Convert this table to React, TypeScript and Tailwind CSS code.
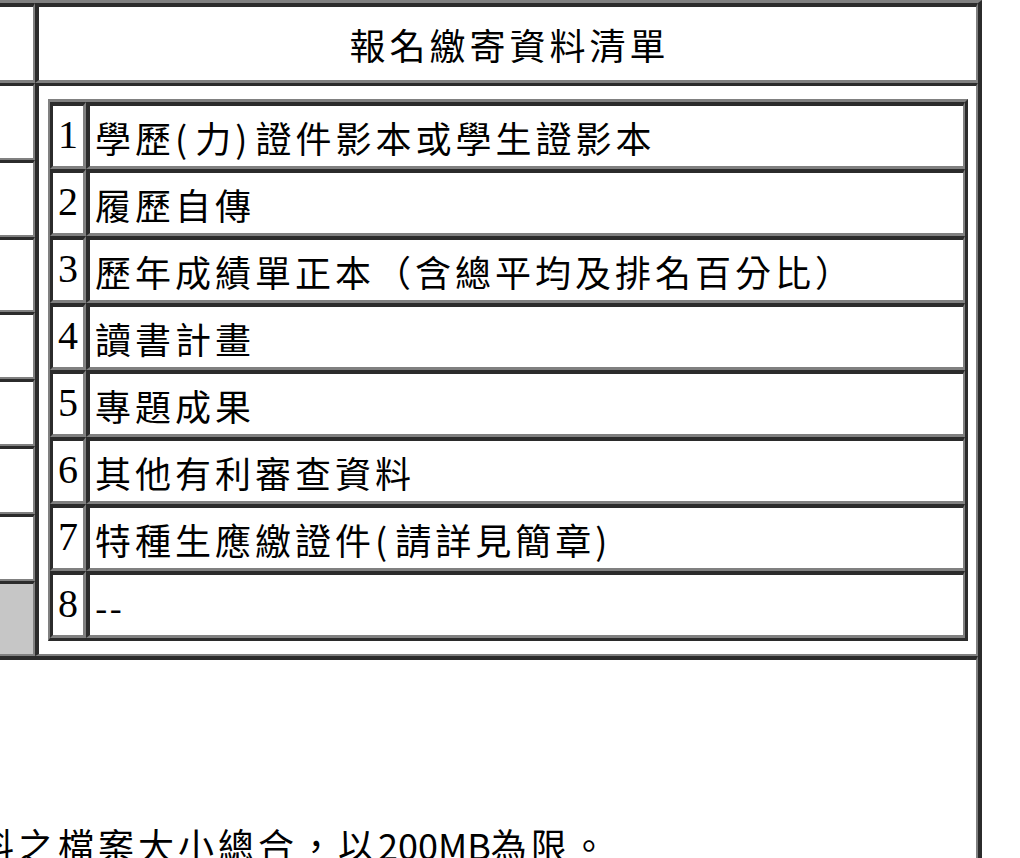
const cjk = "font-['Noto_Sans_CJK_TC','Noto_Sans_CJK_SC',sans-serif]";

const items = [
  "學歷(力)證件影本或學生證影本",
  "履歷自傳",
  "歷年成績單正本（含總平均及排名百分比）",
  "讀書計畫",
  "專題成果",
  "其他有利審查資料",
  "特種生應繳證件(請詳見簡章)",
  "--",
];

// left column cell heights (content only)
const leftRows = [72, 72, 70, 62, 62, 63, 62, 70];

function Label({ text }: { text: string }) {
  if (text === "--") return <span className="tracking-[2px]">--</span>;
  const parts = text.split(/([()])/);
  return (
    <>
      {parts.map((p, i) =>
        p === "(" || p === ")" ? (
          <span key={i} className="tracking-[8px]">
            {p}
          </span>
        ) : (
          <span key={i}>{p}</span>
        )
      )}
    </>
  );
}

function ListTable() {
  return (
    <div className="w-full border-t-[3px] border-l-[2px] border-t-[#808080] border-l-[#808080] border-r-[3px] border-b-[3px] border-r-[#2b2b2b] border-b-[#2b2b2b]">
      {items.map((it, i) => (
        <div key={i} className="flex h-[67px]">
          <div className="w-[36px] shrink-0 border-t-[4px] border-l-[3px] border-t-[#2b2b2b] border-l-[#2b2b2b] border-b-[3px] border-r-[3px] border-b-[#808080] border-r-[#808080] flex justify-center pt-[9px] font-['Liberation_Serif',serif] text-[40px] leading-[40px] text-black">
            {i + 1}
          </div>
          <div className="flex-1 border-t-[4px] border-l-[4px] border-t-[#2b2b2b] border-l-[#2b2b2b] border-b-[3px] border-r-[2px] border-b-[#808080] border-r-[#808080] pl-[5px] pt-[11px] whitespace-nowrap text-[36px] leading-[40px] tracking-[4px] text-black">
            <Label text={it} />
          </div>
        </div>
      ))}
    </div>
  );
}

export default function App() {
  return (
    <div className={`w-[1020px] h-[858px] overflow-hidden bg-white ${cjk}`}>
      <div className="w-[982px] border-t-[3px] border-t-[#808080] border-r-[4px] border-r-[#2b2b2b]">
        {/* header row */}
        <div className="flex h-[80px]">
          <div className="w-[35px] shrink-0 border-t-[4px] border-t-[#2b2b2b] border-b-[3px] border-r-[2px] border-b-[#808080] border-r-[#808080]" />
          <div className="flex-1 border-t-[4px] border-l-[4px] border-t-[#2b2b2b] border-l-[#2b2b2b] border-b-[3px] border-r-[2px] border-b-[#808080] border-r-[#808080] flex items-center justify-center text-[36px] leading-[40px] tracking-[4px] text-black">
            <span className="ml-[4px]">報名繳寄資料清單</span>
          </div>
        </div>

        {/* body rows */}
        <div className="flex">
          <div className="w-[35px] shrink-0 flex flex-col">
            {leftRows.map((h, i) => (
              <div
                key={i}
                style={{ height: h + 5 }}
                className={`border-t-[3px] border-t-[#2b2b2b] border-b-[2px] border-r-[2px] border-b-[#808080] border-r-[#808080] ${
                  i === leftRows.length - 1 ? "bg-[#c6c6c6]" : "bg-white"
                }`}
              />
            ))}
          </div>
          <div className="flex-1 border-t-[3px] border-l-[4px] border-t-[#2b2b2b] border-l-[#2b2b2b] border-b-[2px] border-r-[2px] border-b-[#808080] border-r-[#808080] flex items-center pl-[9px] pr-[8px]">
            <ListTable />
          </div>
        </div>

        {/* bottom row */}
        <div className="h-[220px] border-t-[4px] border-t-[#2b2b2b] border-r-[2px] border-r-[#808080] pt-[164px]">
          <div className="-ml-[62px] whitespace-nowrap text-[36px] leading-[40px] tracking-[4px] text-black">
            資料之檔案大小總合，以<span className="tracking-normal">200MB</span>為限。
          </div>
        </div>
      </div>
    </div>
  );
}
